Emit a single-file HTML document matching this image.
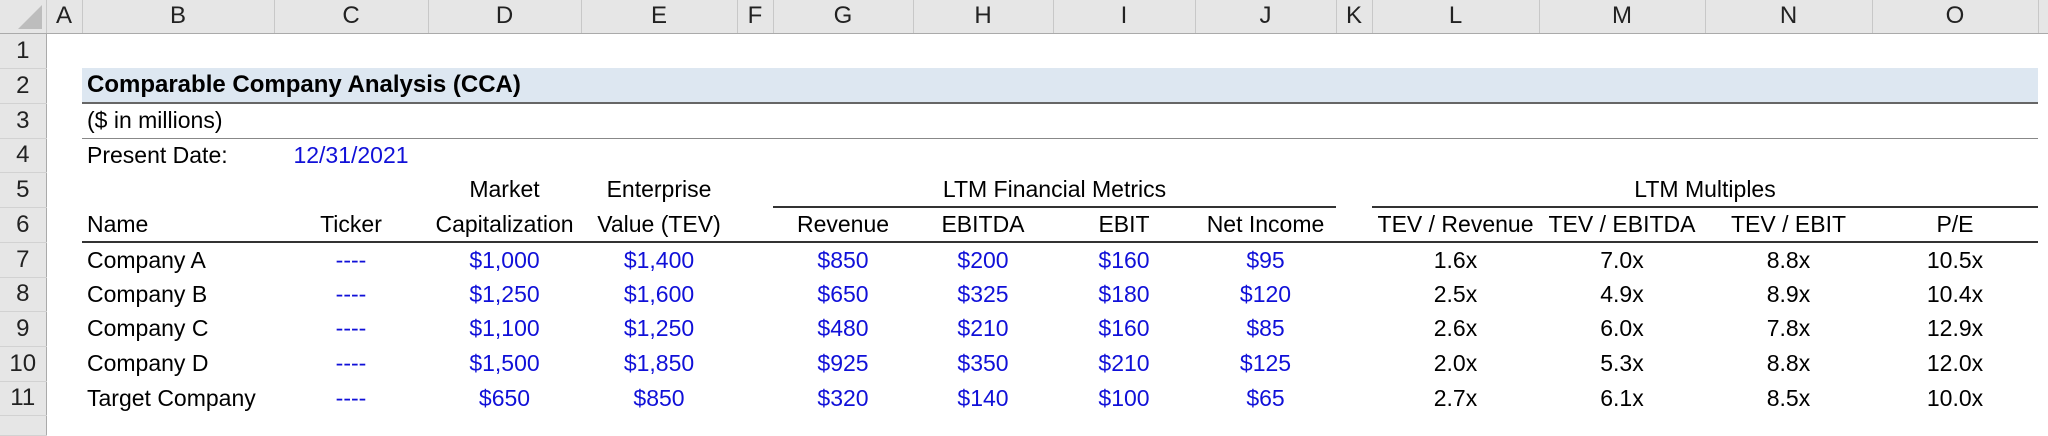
<!DOCTYPE html>
<html><head><meta charset="utf-8">
<style>
html,body{margin:0;padding:0;background:#fff;}
body{width:2048px;height:422px;overflow:hidden;font-family:"Liberation Sans",Arial,sans-serif;font-size:23px;color:#000;}
table{border-collapse:collapse;table-layout:fixed;width:2048px;}
td{padding:0 5px;white-space:nowrap;overflow:visible;vertical-align:middle;}
tr.h td{background:#e6e6e6;text-align:center;border-right:1px solid #c8c8c8;border-bottom:1px solid #aaa;color:#222;font-size:24px;}
td.r{background:#e6e6e6;text-align:center;border-right:1px solid #aaa;border-bottom:1px solid #d2d2d2;color:#222;font-size:24px;padding:0;}
.c{text-align:center;}
.b{color:#1010d8;}
.band{background:#dde7f1;}
.bb{border-bottom:2px solid #666;}
.bt{border-bottom:1px solid #888;}
.bl{border-bottom:2px solid #333;}
</style></head><body>
<table>
<colgroup>
<col style="width:46px"><col style="width:36px"><col style="width:192px"><col style="width:154px"><col style="width:153px"><col style="width:156px"><col style="width:36px"><col style="width:140px"><col style="width:140px"><col style="width:142px"><col style="width:141px"><col style="width:36px"><col style="width:167px"><col style="width:166px"><col style="width:167px"><col style="width:166px"><col style="width:10px">
</colgroup>
<tr class="h" style="height:33px"><td style="padding:0;position:relative"><svg width="30" height="30" style="position:absolute;right:2px;bottom:2px"><polygon points="28,4 28,28 4,28" fill="#bdbdbd"/></svg></td><td>A</td><td>B</td><td>C</td><td>D</td><td>E</td><td>F</td><td>G</td><td>H</td><td>I</td><td>J</td><td>K</td><td>L</td><td>M</td><td>N</td><td>O</td><td></td></tr>
<tr style="height:35px"><td class="r">1</td><td colspan="16"></td></tr>
<tr style="height:35px"><td class="r">2</td><td></td><td colspan="14" class="band bb" style="font-weight:bold;font-size:24px">Comparable Company Analysis (CCA)</td><td></td></tr>
<tr style="height:35px"><td class="r">3</td><td></td><td colspan="14" class="bt">($ in millions)</td><td></td></tr>
<tr style="height:34px"><td class="r">4</td><td></td><td>Present Date:</td><td class="c b">12/31/2021</td><td colspan="13"></td></tr>
<tr style="height:35px"><td class="r">5</td><td></td><td></td><td></td><td class="c">Market</td><td class="c">Enterprise</td><td></td><td colspan="4" class="c bl">LTM Financial Metrics</td><td></td><td colspan="4" class="c bl">LTM Multiples</td><td></td></tr>
<tr style="height:35px"><td class="r">6</td><td></td><td class="bl">Name</td><td class="c bl">Ticker</td><td class="c bl">Capitalization</td><td class="c bl">Value (TEV)</td><td class="bl"></td><td class="c bl">Revenue</td><td class="c bl">EBITDA</td><td class="c bl">EBIT</td><td class="c bl">Net Income</td><td class="bl"></td><td class="c bl">TEV / Revenue</td><td class="c bl">TEV / EBITDA</td><td class="c bl">TEV / EBIT</td><td class="c bl">P/E</td><td></td></tr>
<tr style="height:35px"><td class="r">7</td><td></td><td>Company A</td><td class="c b">----</td><td class="c b">$1,000</td><td class="c b">$1,400</td><td></td><td class="c b">$850</td><td class="c b">$200</td><td class="c b">$160</td><td class="c b">$95</td><td></td><td class="c">1.6x</td><td class="c">7.0x</td><td class="c">8.8x</td><td class="c">10.5x</td><td></td></tr>
<tr style="height:34px"><td class="r">8</td><td></td><td>Company B</td><td class="c b">----</td><td class="c b">$1,250</td><td class="c b">$1,600</td><td></td><td class="c b">$650</td><td class="c b">$325</td><td class="c b">$180</td><td class="c b">$120</td><td></td><td class="c">2.5x</td><td class="c">4.9x</td><td class="c">8.9x</td><td class="c">10.4x</td><td></td></tr>
<tr style="height:35px"><td class="r">9</td><td></td><td>Company C</td><td class="c b">----</td><td class="c b">$1,100</td><td class="c b">$1,250</td><td></td><td class="c b">$480</td><td class="c b">$210</td><td class="c b">$160</td><td class="c b">$85</td><td></td><td class="c">2.6x</td><td class="c">6.0x</td><td class="c">7.8x</td><td class="c">12.9x</td><td></td></tr>
<tr style="height:35px"><td class="r">10</td><td></td><td>Company D</td><td class="c b">----</td><td class="c b">$1,500</td><td class="c b">$1,850</td><td></td><td class="c b">$925</td><td class="c b">$350</td><td class="c b">$210</td><td class="c b">$125</td><td></td><td class="c">2.0x</td><td class="c">5.3x</td><td class="c">8.8x</td><td class="c">12.0x</td><td></td></tr>
<tr style="height:34px"><td class="r">11</td><td></td><td>Target Company</td><td class="c b">----</td><td class="c b">$650</td><td class="c b">$850</td><td></td><td class="c b">$320</td><td class="c b">$140</td><td class="c b">$100</td><td class="c b">$65</td><td></td><td class="c">2.7x</td><td class="c">6.1x</td><td class="c">8.5x</td><td class="c">10.0x</td><td></td></tr>
<tr style="height:20px"><td class="r"></td><td colspan="16"></td></tr>
</table>
</body></html>
